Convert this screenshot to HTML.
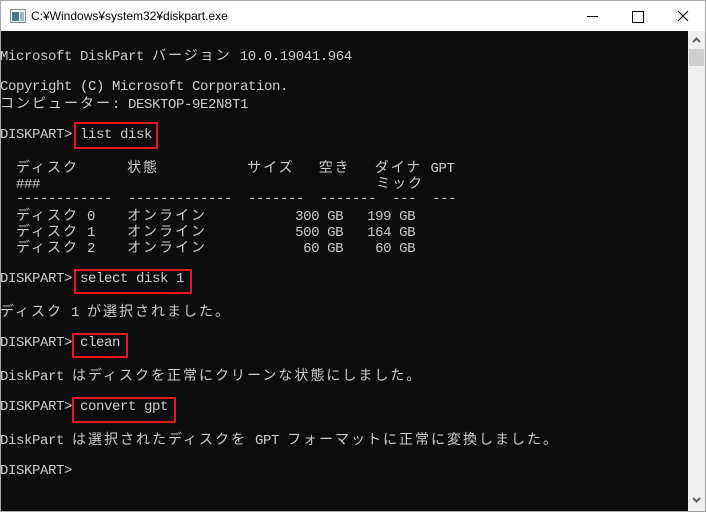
<!DOCTYPE html>
<html><head><meta charset="utf-8"><style>
body{margin:0;width:706px;height:512px;overflow:hidden;background:#fff;position:relative}
#win{position:absolute;left:0;top:0;width:704px;height:510px;border:1px solid #a8a8a8;background:#fff}
#title{position:absolute;left:0;top:0;width:704px;height:30px;background:#fff}
#title .t{position:absolute;left:30px;top:8px;font:12px "Liberation Sans",sans-serif;color:#000}
#con{position:absolute;left:0;top:30px;width:687px;height:480px;background:#0c0c0c}
#sb{position:absolute;left:687px;top:30px;width:17px;height:480px;background:#f0f0f0}
.l{position:absolute;left:0;height:16px;line-height:16px;font-family:"Liberation Mono",monospace;font-size:14px;letter-spacing:-0.4px;color:#cccccc;white-space:pre}
.j{font-family:"Noto Sans CJK JP",sans-serif;font-size:14px;letter-spacing:2px;position:relative;top:-0.5px;line-height:16px}
.box{position:absolute;border:2px solid #e4161e;box-sizing:border-box}
</style></head><body>
<div id="win">
<div id="title">
<svg style="position:absolute;left:9px;top:8px" width="16" height="14"><rect x="0.5" y="0.5" width="15" height="13" fill="#fff" stroke="#888"/><rect x="2" y="3" width="7" height="9" fill="#4a7a8c"/><rect x="10" y="3" width="4" height="9" fill="#9bc"/></svg>
<span class="t">C:¥Windows¥system32¥diskpart.exe</span>
<div style="position:absolute;left:586px;top:15px;width:11px;height:1px;background:#000"></div>
<div style="position:absolute;left:631px;top:10px;width:10px;height:10px;border:1px solid #000"></div>
<svg style="position:absolute;left:676px;top:9px" width="12" height="12"><path d="M1 1L11 11M11 1L1 11" stroke="#000" stroke-width="1"/></svg>
</div>
<div id="con"></div>
<div id="sb">
<svg style="position:absolute;left:4px;top:6px" width="9" height="6"><path d="M1 5L4.5 1.5L8 5" stroke="#606060" stroke-width="2" fill="none"/></svg>
<div style="position:absolute;left:1px;top:18px;width:15px;height:17px;background:#cdcdcd"></div>
<svg style="position:absolute;left:4px;top:466px" width="9" height="6"><path d="M1 1L4.5 4.5L8 1" stroke="#606060" stroke-width="2" fill="none"/></svg>
</div>
</div>
<div class="l" style="top:47px">Microsoft DiskPart <span class="j">バージョン</span> 10.0.19041.964</div>
<div class="l" style="top:79px">Copyright (C) Microsoft Corporation.</div>
<div class="l" style="top:95px"><span class="j">コンピューター</span>: DESKTOP-9E2N8T1</div>
<div class="l" style="top:127px">DISKPART> list disk</div>
<div class="l" style="top:159px">  <span class="j">ディスク</span>      <span class="j">状態</span>           <span class="j">サイズ</span>   <span class="j">空き</span>   <span class="j">ダイナ</span> GPT</div>
<div class="l" style="top:175px">  ###                                          <span class="j">ミック</span></div>
<div class="l" style="top:191px">  ------------  -------------  -------  -------  ---  ---</div>
<div class="l" style="top:207px">  <span class="j">ディスク</span> 0    <span class="j">オンライン</span>           300 GB   199 GB</div>
<div class="l" style="top:223px">  <span class="j">ディスク</span> 1    <span class="j">オンライン</span>           500 GB   164 GB</div>
<div class="l" style="top:239px">  <span class="j">ディスク</span> 2    <span class="j">オンライン</span>            60 GB    60 GB</div>
<div class="l" style="top:271px">DISKPART> select disk 1</div>
<div class="l" style="top:303px"><span class="j">ディスク</span> 1 <span class="j">が選択されました。</span></div>
<div class="l" style="top:335px">DISKPART> clean</div>
<div class="l" style="top:367px">DiskPart <span class="j">はディスクを正常にクリーンな状態にしました。</span></div>
<div class="l" style="top:399px">DISKPART> convert gpt</div>
<div class="l" style="top:431px">DiskPart <span class="j">は選択されたディスクを</span> GPT <span class="j">フォーマットに正常に変換しました。</span></div>
<div class="l" style="top:463px">DISKPART></div>
<div class="box" style="left:74px;top:122px;width:84px;height:27px"></div>
<div class="box" style="left:74px;top:269px;width:118px;height:25px"></div>
<div class="box" style="left:72px;top:333px;width:56px;height:25px"></div>
<div class="box" style="left:72px;top:397px;width:104px;height:26px"></div>
</body></html>
